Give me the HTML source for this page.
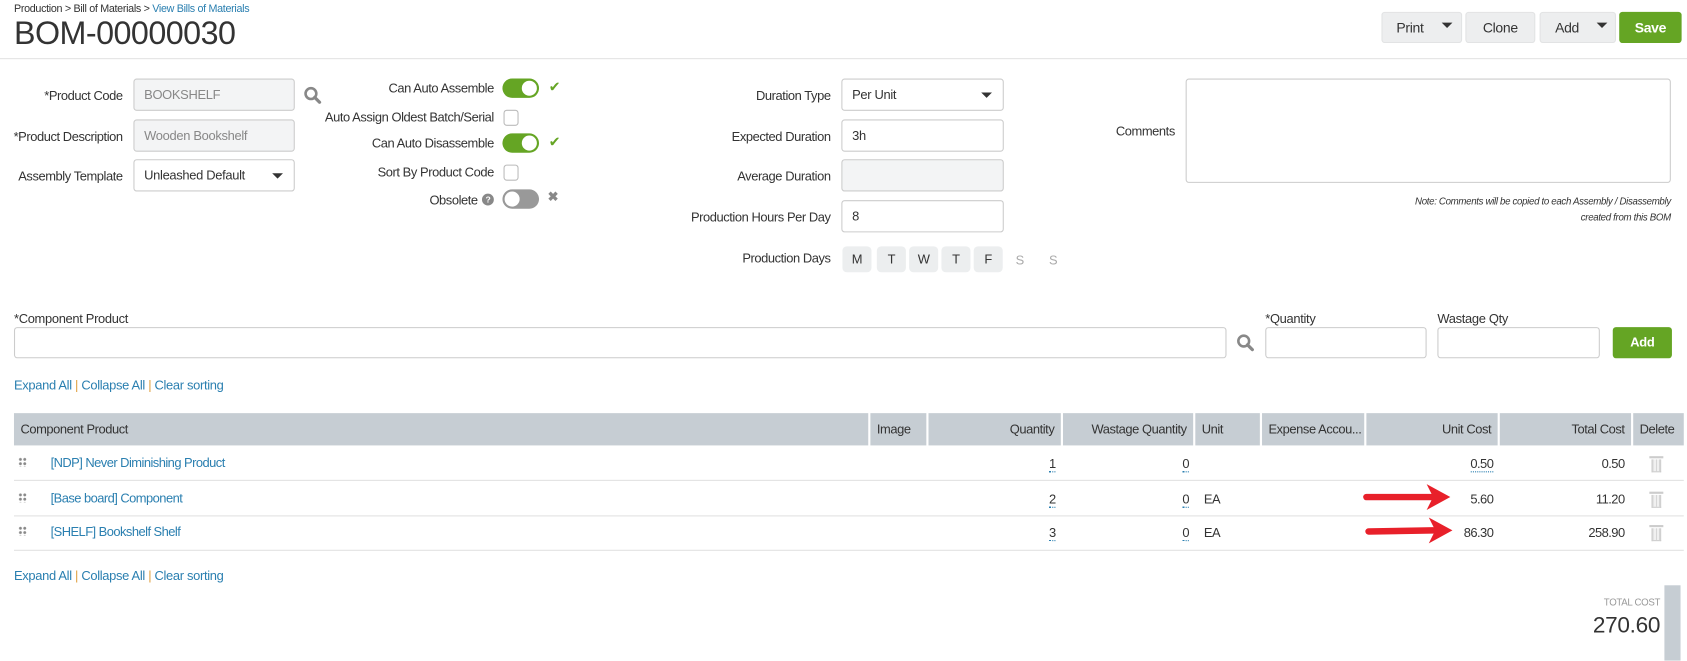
<!DOCTYPE html>
<html><head><meta charset="utf-8"><style>
*{box-sizing:border-box;margin:0;padding:0}
body{width:1687px;height:661px;overflow:hidden;background:#fff;font-family:"Liberation Sans",sans-serif;font-size:12px;color:#333;position:relative}
#w{position:absolute;left:0;top:0;width:1568px;height:614px;transform:scale(1.07589);transform-origin:0 0;letter-spacing:-0.3px}
.a{position:absolute;white-space:nowrap}
.lbl{position:absolute;text-align:right;white-space:nowrap;font-size:12px;color:#333;letter-spacing:-0.4px}
.inp{position:absolute;border:1px solid #ccc;border-radius:3px;background:#fff;padding:0 9px;line-height:28px;font-size:12px}
.dis{background:#f3f4f5;color:#888}
.caret{position:absolute;right:10px;top:12px;width:0;height:0;border-left:5px solid transparent;border-right:5px solid transparent;border-top:5px solid #333}
.tog{position:absolute;width:34px;height:18px;border-radius:9px;background:#65a524}
.tog:after{content:"";position:absolute;right:2px;top:2px;width:14px;height:14px;border-radius:50%;background:#fff}
.tog.off{background:#999}.tog.off:after{left:2px;right:auto}
.chk{position:absolute;width:14px;height:15px;border:1px solid #bbb;border-radius:3px}
.btn{position:absolute;background:#edeeef;border:1px solid #e2e3e4;border-radius:3px;text-align:center;line-height:27px;font-size:13px;color:#333}
.day{position:absolute;top:229px;width:27px;height:24px;background:#eceeef;border-radius:4px;text-align:center;line-height:24px;font-size:12px;color:#333}
.link{color:#2a7fb0}
.th{position:absolute;top:384px;height:30px;background:#c6cdd3;line-height:30px;font-size:12px;color:#333;padding:0 6px;white-space:nowrap;overflow:hidden;letter-spacing:-0.4px}
.row{position:absolute;left:13px;width:1552px;height:1px;background:#e2e2e2}
.td{position:absolute;font-size:12px;line-height:14px;white-space:nowrap;letter-spacing:-0.5px}
.u{border-bottom:1px dotted #2a7fb0}
.grip{position:absolute;left:17px;width:8px;height:9px;background:radial-gradient(circle,#888 1.2px,transparent 1.5px) 0 0/4px 4px}
.trash{position:absolute;left:1535px;width:9px;height:12px;border:1px solid #ccc;border-top:none;background:repeating-linear-gradient(90deg,#d6d6d6 0 1px,#f0f0f0 1px 3px)}
.trash:before{content:"";position:absolute;left:-3px;top:-3px;width:13px;height:2px;background:#ccc}
</style></head><body><div id="w">
<div class="a" style="left:13px;top:3px;font-size:10px;color:#333">Production &gt; Bill of Materials &gt; <span class="link">View Bills of Materials</span></div>
<div class="a" style="left:13px;top:15px;font-size:30px;color:#333;letter-spacing:-0.5px">BOM-00000030</div>
<div class="a" style="left:0;top:54px;width:1568px;height:1px;background:#e3e3e3"></div>

<div class="btn" style="left:1284px;top:11px;width:75px;padding-right:22px">Print</div>
<div class="caret" style="left:1340px;top:21px;right:auto"></div>
<div class="btn" style="left:1362px;top:11px;width:65px">Clone</div>
<div class="btn" style="left:1431px;top:11px;width:71px;padding-right:20px">Add</div>
<div class="caret" style="left:1484px;top:21px;right:auto"></div>
<div class="btn" style="left:1505px;top:11px;width:58px;background:#65a524;border-color:#65a524;color:#fff;font-weight:bold">Save</div>

<div class="lbl" style="right:1454px;top:82px">*Product Code</div>
<div class="inp dis" style="left:124px;top:73px;width:150px">BOOKSHELF</div>
<svg class="a" style="left:282px;top:80px" width="17" height="17" viewBox="0 0 17 17"><circle cx="7" cy="7" r="5" fill="none" stroke="#888" stroke-width="2.4"/><path d="M10.5 10.5 L15 15" stroke="#888" stroke-width="3" stroke-linecap="round"/></svg>
<div class="lbl" style="right:1454px;top:120px">*Product Description</div>
<div class="inp dis" style="left:124px;top:111px;width:150px">Wooden Bookshelf</div>
<div class="lbl" style="right:1454px;top:157px">Assembly Template</div>
<div class="inp" style="left:124px;top:148px;width:150px">Unleashed Default<div class="caret"></div></div>

<div class="lbl" style="right:1109px;top:75px">Can Auto Assemble</div>
<div class="tog" style="left:467px;top:73px"></div><div class="a" style="left:510px;top:73px;color:#65a524;font-size:13px">✔</div>
<div class="lbl" style="right:1109px;top:102px">Auto Assign Oldest Batch/Serial</div>
<div class="chk" style="left:468px;top:102px"></div>
<div class="lbl" style="right:1109px;top:126px">Can Auto Disassemble</div>
<div class="tog" style="left:467px;top:124px"></div><div class="a" style="left:510px;top:124px;color:#65a524;font-size:13px">✔</div>
<div class="lbl" style="right:1109px;top:153px">Sort By Product Code</div>
<div class="chk" style="left:468px;top:153px"></div>
<div class="lbl" style="right:1124px;top:179px">Obsolete</div>
<div class="a" style="left:448px;top:180px;width:11px;height:11px;border-radius:50%;background:#888;color:#fff;font-size:8px;text-align:center;line-height:11px;font-weight:bold">?</div>
<div class="tog off" style="left:467px;top:176px"></div><div class="a" style="left:509px;top:176px;color:#888;font-size:12px;font-weight:bold">✖</div>

<div class="lbl" style="right:796px;top:82px">Duration Type</div>
<div class="inp" style="left:782px;top:73px;width:151px">Per Unit<div class="caret"></div></div>
<div class="lbl" style="right:796px;top:120px">Expected Duration</div>
<div class="inp" style="left:782px;top:111px;width:151px">3h</div>
<div class="lbl" style="right:796px;top:157px">Average Duration</div>
<div class="inp dis" style="left:782px;top:148px;width:151px;height:30px"></div>
<div class="lbl" style="right:796px;top:195px">Production Hours Per Day</div>
<div class="inp" style="left:782px;top:186px;width:151px">8</div>
<div class="lbl" style="right:796px;top:233px">Production Days</div>
<div class="day" style="left:783px">M</div><div class="day" style="left:815px">T</div><div class="day" style="left:845px">W</div><div class="day" style="left:875px">T</div><div class="day" style="left:905px">F</div>
<div class="a" style="left:944px;top:235px;color:#aaa">S</div><div class="a" style="left:975px;top:235px;color:#aaa">S</div>

<div class="lbl" style="right:476px;top:115px">Comments</div>
<div class="inp" style="left:1102px;top:73px;width:451px;height:97px"></div>
<div class="a" style="right:15px;top:180px;font-size:9px;font-style:italic;text-align:right;line-height:15px">Note: Comments will be copied to each Assembly / Disassembly<br>created from this BOM</div>

<div class="a" style="left:13px;top:289px">*Component Product</div>
<div class="inp" style="left:13px;top:304px;width:1127px;height:29px"></div>
<svg class="a" style="left:1149px;top:310px" width="17" height="17" viewBox="0 0 17 17"><circle cx="7" cy="7" r="5" fill="none" stroke="#888" stroke-width="2.4"/><path d="M10.5 10.5 L15 15" stroke="#888" stroke-width="3" stroke-linecap="round"/></svg>
<div class="a" style="left:1176px;top:289px">*Quantity</div>
<div class="inp" style="left:1176px;top:304px;width:150px;height:29px"></div>
<div class="a" style="left:1336px;top:289px">Wastage Qty</div>
<div class="inp" style="left:1336px;top:304px;width:151px;height:29px"></div>
<div class="btn" style="left:1499px;top:304px;width:55px;height:29px;background:#65a524;border-color:#65a524;color:#fff;font-weight:bold;font-size:12px">Add</div>

<div class="a link" style="left:13px;top:351px">Expand All <span style="color:#e0a040">|</span> Collapse All <span style="color:#e0a040">|</span> Clear sorting</div>

<div class="th" style="left:13px;width:794px">Component Product</div>
<div class="th" style="left:809px;width:52px">Image</div>
<div class="th" style="left:863px;width:123px;text-align:right">Quantity</div>
<div class="th" style="left:988px;width:121px;text-align:right">Wastage Quantity</div>
<div class="th" style="left:1111px;width:60px">Unit</div>
<div class="th" style="left:1173px;width:95px">Expense Accou...</div>
<div class="th" style="left:1270px;width:122px;text-align:right">Unit Cost</div>
<div class="th" style="left:1394px;width:122px;text-align:right">Total Cost</div>
<div class="th" style="left:1518px;width:47px">Delete</div>

<div class="row" style="top:446px"></div><div class="row" style="top:479px"></div><div class="row" style="top:511px"></div>

<div class="grip" style="top:425px"></div>
<div class="td link" style="left:47px;top:423px">[NDP] Never Diminishing Product</div>
<div class="td u" style="left:975px;top:424px">1</div>
<div class="td u" style="left:1099px;top:424px">0</div>
<div class="td u" style="right:180px;top:424px">0.50</div>
<div class="td" style="right:58px;top:424px">0.50</div>
<div class="trash" style="top:427px"></div>

<div class="grip" style="top:458px"></div>
<div class="td link" style="left:47px;top:456px">[Base board] Component</div>
<div class="td u" style="left:975px;top:457px">2</div>
<div class="td u" style="left:1099px;top:457px">0</div>
<div class="td" style="left:1119px;top:457px">EA</div>
<div class="td" style="right:180px;top:457px">5.60</div>
<div class="td" style="right:58px;top:457px">11.20</div>
<div class="trash" style="top:460px"></div>

<div class="grip" style="top:489px"></div>
<div class="td link" style="left:47px;top:487px">[SHELF] Bookshelf Shelf</div>
<div class="td u" style="left:975px;top:488px">3</div>
<div class="td u" style="left:1099px;top:488px">0</div>
<div class="td" style="left:1119px;top:488px">EA</div>
<div class="td" style="right:180px;top:488px">86.30</div>
<div class="td" style="right:58px;top:488px">258.90</div>
<div class="trash" style="top:491px"></div>

<svg class="a" style="left:1262px;top:448px" width="100" height="60" viewBox="0 0 100 60">
<path d="M8 14 L70 14" stroke="#e8202a" stroke-width="6" stroke-linecap="round"/><path d="M64 2 L86 14 L64 26 L70 14Z" fill="#e8202a"/>
<path d="M10 46 L70 45" stroke="#e8202a" stroke-width="6" stroke-linecap="round"/><path d="M66 33 L88 45 L66 57 L72 45Z" fill="#e8202a"/>
</svg>

<div class="a link" style="left:13px;top:528px">Expand All <span style="color:#e0a040">|</span> Collapse All <span style="color:#e0a040">|</span> Clear sorting</div>

<div class="a" style="right:25px;top:555px;font-size:9px;color:#999">TOTAL COST</div>
<div class="a" style="right:25px;top:570px;font-size:21px;color:#333">270.60</div>
<div class="a" style="left:1547px;top:544px;width:15px;height:70px;background:#c6cdd3"></div>
</div></body></html>
